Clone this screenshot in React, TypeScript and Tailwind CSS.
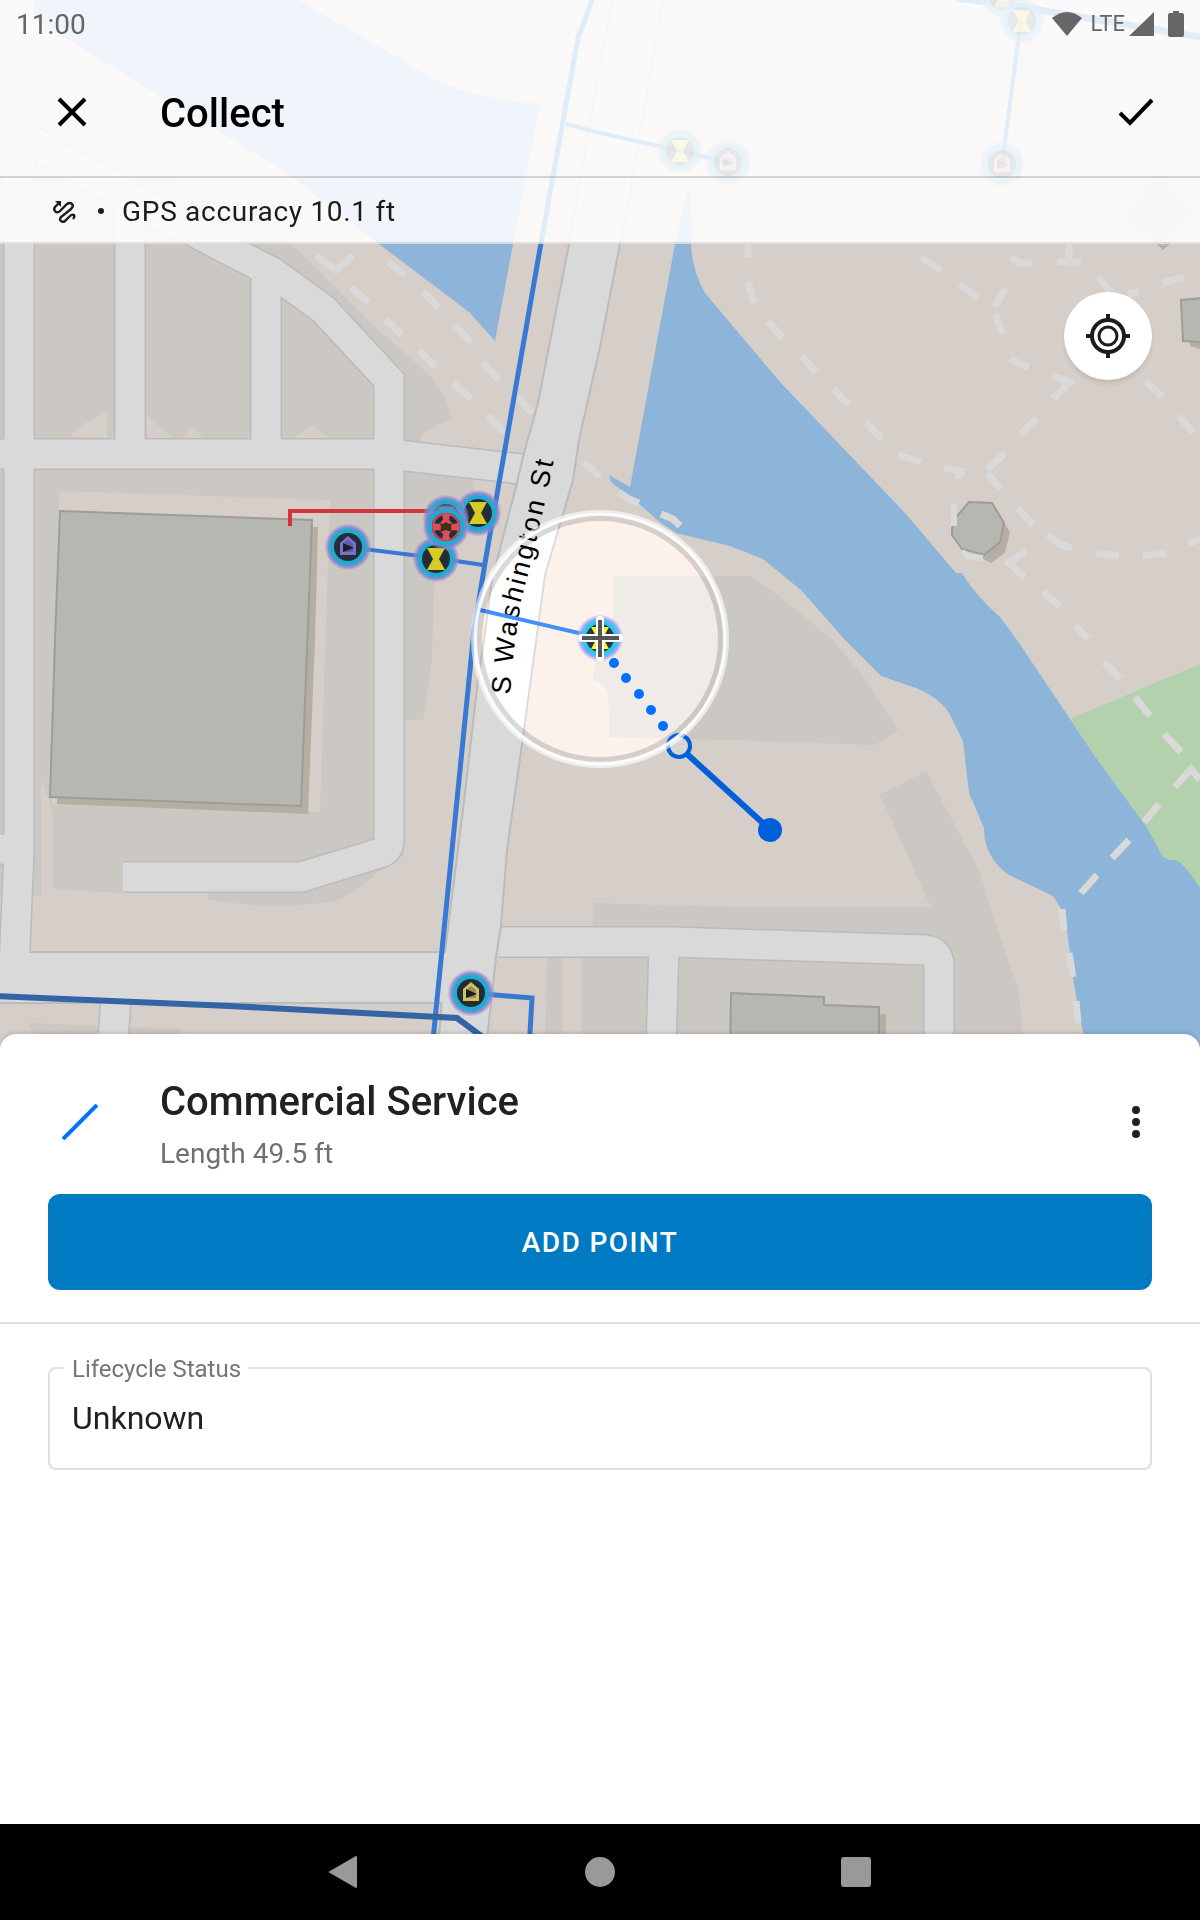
import React from "react";

const ROADS = [
  "M19 0V850L14 970",
  "M130 200V454",
  "M266 272V454",
  "M-20 112L90 175L217 244L272 272L323 309L389 380V840Q389 850 380 853L301 877H123",
  "M-10 454H389L521 469",
  "M-10 849H19",
  "M116 1000L112 1052",
  "M498 942H673L925 950Q939 951 939 966V1052",
  "M664 944L661 1052",
];

const WASHINGTON_ST =
  "M613 -4L597 83L569 244L538 403L524 453L516 487L492 580L484 640L478 680L463 810L445 952L438 1054H487L488 1030L496 957L501 926L507 850L523 737L545 575L573 480L579 440L600 347L620 244L632 180L663 -4Z";

const TRAILS =
  "M748 243V258M748 282L754 303M768 322L783 338M802 356L816 372M833 389L849 405M866 423L882 439M898 455L921 462M944 468L965 472M958 471V479M921 257L941 271M960 284L978 298M1005 288L995 307M995 314L1003 334M1010 359L1029 368M1053 376L1070 382L1053 399M1037 418L1021 434M1005 453L988 469M987 473L1001 489M1018 508L1033 525M1048 535L1059 544L1072 548M1096 553L1119 556M1143 556L1166 553M1188 544L1200 539M1026 551L1009 563L1024 577M1043 592L1060 606M1075 625L1088 639M1146 382L1163 397M1179 416L1193 433M1011 257L1020 263H1032M1057 262H1081M1069 243V262M1098 277L1111 292M1128 294L1139 292M1162 283L1184 277M661 514L673 519L680 526M619 492L629 499L639 503M1104 662L1120 678M1135 697L1150 716M1164 734L1181 752M1159 804L1144 822M1129 840L1112 858M1097 875L1081 893M1175 787L1191 769L1200 780M1062 909L1064 930M1069 953L1073 977M1076 1001L1078 1023M316 256L336 270L353 256M351 288L369 302M386 320L402 335M419 351L436 367M453 383L471 399M488 416L504 432M388 262L405 275M423 292L439 308M455 326L471 342M483 363L499 380M517 397L532 413M584 462L600 477";

function Halo() {
  return (
    <>
      <circle r="23" fill="url(#halo)" />
      <circle r="14" fill="#2b3440" />
    </>
  );
}

function Valve({ x, y }: { x: number; y: number }) {
  return (
    <g transform={`translate(${x} ${y})`}>
      <Halo />
      <path d="M-9 -11H9L3 0L9 11H-9L-3 0Z" fill="#fdf02c" />
    </g>
  );
}

function Meter({ x, y, color }: { x: number; y: number; color: string }) {
  return (
    <g transform={`translate(${x} ${y})`}>
      <Halo />
      <path d="M-8 -4L0 -11L8 -4V8H-8Z" fill={color} />
      <path d="M-5 -3L0 -7L5 -3V5H-5Z" fill="#4c4a66" opacity="0.4" />
      <path d="M-5 -4L6 1L-5 5Z" fill="#1e2030" />
    </g>
  );
}

function Regulator({ x, y }: { x: number; y: number }) {
  return (
    <g transform={`translate(${x} ${y})`}>
      <Halo />
      <circle r="13" fill="none" stroke="#ff4a5c" strokeWidth="2" />
      <path
        d="M-4 -13H4L3 -7L7 -3L13 -4V4L7 3L3 7L4 13H-4L-3 7L-7 3L-13 4V-4L-7 -3L-3 -7Z"
        fill="#ff5e6e"
      />
      <path d="M-6 -4L-3 -3L0 -5L3 -3L6 -4L5 0L6 5L0 3L-6 5L-5 0Z" fill="#4a3a10" />
    </g>
  );
}

function MapCanvas() {
  return (
    <svg
      viewBox="0 0 1200 1050"
      preserveAspectRatio="xMidYMin slice"
      className="absolute inset-0 h-full w-full"
      role="img"
      aria-label="Map of S Washington St"
    >
      <defs>
        <radialGradient id="halo">
          <stop offset="0.6" stopColor="#1ccdf0" />
          <stop offset="0.74" stopColor="#2cc6f6" />
          <stop offset="0.86" stopColor="#8d9cf6" stopOpacity="0.85" />
          <stop offset="1" stopColor="#d0a8f0" stopOpacity="0.25" />
        </radialGradient>
        <mask id="lens">
          <rect width="1200" height="1050" fill="white" />
          <circle cx="600" cy="639" r="118" fill="black" />
        </mask>
        <path id="street" d="M510 695Q514 640 522 597Q532 560 544 507L558 440" />
      </defs>

      <rect width="1200" height="1050" fill="#fcf2eb" />

      <g fill="#efebe7">
        <path d="M0 130L100 130L291 244L375 327L432 377L446 400L451 418L421 435V471L474 480V500L434 585L432 660L423 720H404V855L377 872Q350 900 325 903Q264 909 208 900V893H123L53 889V812L41 780V896H0Z" />
        <path d="M340 0L560 20L530 80L480 80L420 50Z" />
        <path d="M690 20L760 10L964 40L1200 80V110L950 80L700 50Z" />
        <path d="M613 576H751L784 600L833 640L864 677L898 730L875 745L692 739L610 737L608 697Q606 682 593 680L597 655L613 640Z" />
        <path d="M593 903L740 907L931 907L880 795L926 771L979 870L994 920L1019 990L1024 1050H582V957H592Z" />
        <path d="M547 957H562V1050H545Z" />
        <path d="M27 1023L184 1029L170 1040L40 1040Z" />
      </g>
      <g fill="#fcf2eb">
        <path d="M59 491L330 500L320 812L52 804Z" />
        <path d="M69 437Q88 418 107 412V438Z" />
        <path d="M147 415L172 438H147Z" />
        <path d="M182 438L192 426L203 438Z" />
        <path d="M293 438L312 426L329 438Z" />
      </g>

      <g fill="#a6d5ff">
        <path d="M5 0H298L402 60Q440 85 475 94L520 102L540 103L533 140L513 244L495 341L469 312L379 244L283 170L153 92Z" />
        <path d="M688 190L675 244L630 487L609 475L611 482L638 503L661 523L676 533L730 546L763 559L801 590L845 640L881 676L916 688Q945 700 953 721L963 741L969 793L984 828L985 840Q990 862 1009 875L1053 896L1065 915L1073 977L1080 1020L1088 1050H1200V880L1094 755L1070 719L1017 640L1000 617Q975 595 962 573H956L906 514L780 382L705 293Q692 270 691 244L690 190Z" />
      </g>
      <path
        d="M1070 719L1200 664V888Q1186 866 1176 860H1170L1163 857L1147 828L1094 755Z"
        fill="#d3f6cc"
      />

      <g fill="none" stroke="#dcdcdc" strokeWidth="32">
        {ROADS.map((d) => (
          <path key={d} d={d} />
        ))}
      </g>
      <path d="M-4 952H447V1003H-4Z" fill="#fff" stroke="#dcdcdc" strokeWidth="2" />
      <g fill="none" stroke="#fff" strokeWidth="29">
        {ROADS.map((d) => (
          <path key={d} d={d} />
        ))}
      </g>
      <path d="M753 -2L964 30L1200 62V10L1120 -2Z" fill="#fff" />
      <path d={WASHINGTON_ST} fill="#fff" stroke="#dcdcdc" strokeWidth="2" />
      <path d="M400 953H460V1002H400Z" fill="#fff" />

      <g fill="#d5cec0">
        <path d="M312 527H318L315 640L308 814L57 804V796H301Z" />
        <path d="M1004 523L1010 532L1005 553L991 563L981 558L984 550Z" />
        <path d="M1190 341H1200V349L1190 346Z" />
        <path d="M879 1014H886V1050H879Z" />
        <path d="M1155 242L1163 250L1172 242Z" />
      </g>
      <g fill="#d8d7d0" stroke="#b9b8b1" strokeWidth="2">
        <path d="M60 511L312 520L301 806L50 797L55 640Z" />
        <path d="M969 502L992 503L1004 523L1000 542L984 555L962 549L952 535V528L957 516Z" />
        <path d="M1202 298L1181 300L1183 341L1202 342Z" />
        <path d="M731 993L824 997V1005L879 1007V1054H730Z" />
      </g>
      <path d="M1157 172L1124 218L1163 246L1196 212Z" fill="#e6e4dd" />

      <path d={TRAILS} fill="none" stroke="#fff" strokeWidth="7" />
      <path d="M954 504V526M962 552L970 557L983 558" fill="none" stroke="#fff" strokeWidth="6" />

      <text
        className="font-['Liberation_Sans',sans-serif] text-[27px] tracking-widest"
        fill="#000"
      >
        <textPath href="#street">S Washington St</textPath>
      </text>

      <g fill="none" stroke="#4290f8" strokeWidth="4">
        <path d="M593 -2L578 38L541 243L485 563L474 630L433 1040" strokeWidth="5" />
        <path d="M566 124L600 133L681 151L728 163M1021 20L1002 164" />
        <path d="M348 547L436 558L483 565M480 610L600 638" />
        <path d="M471 993L532 998L529 1050" strokeWidth="5" />
        <path d="M-4 996L230 1006L457 1018L500 1050" stroke="#3d76c2" strokeWidth="6" />
        <path d="M956 -2L1010 5L1200 37" strokeWidth="7" />
        <path d="M290 526V511H440" stroke="#fb3c45" />
      </g>

      <Meter x={348} y={547} color="#8f85f5" />
      <Valve x={436} y={559} />
      <Valve x={478} y={513} />
      <g transform="translate(446 518)">
        <Halo />
        <path d="M-8 -11H8L3 -2H-3Z" fill="#4fb3a2" />
      </g>
      <Regulator x={446} y={527} />
      <Meter x={471} y={993} color="#f2e56a" />
      <g opacity="0.7">
        <Valve x={1003} y={-4} />
        <Valve x={680} y={151} />
        <Meter x={728} y={162} color="#f0a0d0" />
        <Valve x={1022} y={21} />
        <Meter x={1002} y={164} color="#f0a0d0" />
      </g>
      <Valve x={600} y={638} />

      <g fill="#0070ff">
        <circle cx="614" cy="663" r="5" />
        <circle cx="626" cy="678" r="5" />
        <circle cx="639" cy="694" r="5" />
        <circle cx="651" cy="710" r="5" />
        <circle cx="663" cy="726" r="5" />
        <circle cx="770" cy="830" r="12" />
      </g>
      <circle cx="679" cy="746" r="11" fill="#fff" fillOpacity="0.5" stroke="#0070ff" strokeWidth="4" />
      <path d="M687 754L765 825" stroke="#0070ff" strokeWidth="6" />

      <rect width="1200" height="1050" fill="#000" opacity="0.15" mask="url(#lens)" />

      <g fill="none" stroke="#fff">
        <circle cx="600" cy="639" r="126" strokeWidth="6" opacity="0.6" />
        <circle cx="600" cy="639" r="125" strokeWidth="3" opacity="0.8" />
      </g>
      <path d="M600 620V657M582 638H619" stroke="#fff" strokeWidth="8" strokeLinecap="round" />
      <path d="M600 620V657M582 638H619" stroke="#555" strokeWidth="4" />
    </svg>
  );
}

function StatusBar() {
  return (
    <div className="flex h-12 items-center justify-between px-4 text-[#666]">
      <span className="pt-0.5 text-[28px] leading-8">11:00</span>
      <div className="flex items-center">
        <svg viewBox="0 0 30 24" className="h-6 w-[30px]" fill="currentColor" aria-hidden="true">
          <path d="M0 6Q15 -6 30 6L15 24Z" />
        </svg>
        <span className="ml-2 text-[22px] leading-6">LTE</span>
        <svg viewBox="0 0 25 24" className="ml-1 h-6 w-[25px]" fill="currentColor" aria-hidden="true">
          <path d="M25 0V24H0Z" />
        </svg>
        <svg viewBox="0 0 16 26" className="ml-3.5 h-[26px] w-4" fill="currentColor" aria-hidden="true">
          <path d="M5 0H11V2H14Q16 2 16 4V24Q16 26 14 26H2Q0 26 0 24V4Q0 2 2 2H5Z" />
        </svg>
      </div>
    </div>
  );
}

function TopBar() {
  return (
    <header className="flex h-32 items-center px-8">
      <button type="button" aria-label="Close" className="flex size-20 items-center justify-center">
        <svg viewBox="0 0 32 32" className="size-8" fill="none" stroke="#000" strokeWidth="4" aria-hidden="true">
          <path d="M3 3L29 29M29 3L3 29" />
        </svg>
      </button>
      <h1 className="ml-12 flex-1 pt-1 text-[40px] leading-[48px] font-medium text-black">Collect</h1>
      <button type="button" aria-label="Done" className="flex size-16 items-center justify-center">
        <svg viewBox="0 0 36 28" className="h-7 w-9" fill="none" stroke="#000" strokeWidth="4" aria-hidden="true">
          <path d="M2 15L12 25L34 2" />
        </svg>
      </button>
    </header>
  );
}

function GpsBar() {
  return (
    <div className="flex h-[68px] items-center border-t-2 border-b-2 border-t-black/15 border-b-black/10 pt-0.5 pl-[52px] text-[#1c1c1c]">
      <svg viewBox="0 0 24 24" className="size-6" fill="none" stroke="currentColor" strokeWidth="2.4" aria-hidden="true">
        <path d="M3 2H9V8Z" fill="currentColor" stroke="none" />
        <path d="M7 4L3 8Q1 11 4 13Q6 14 8 12L15 5Q18 3 20 5Q22 7 19 10L9 18Q7 21 9 22Q12 24 14 21L18 17Q20 15 22 16Q23 18 21 20" />
      </svg>
      <span className="ml-[22px] size-1.5 rounded-full bg-current" />
      <p className="ml-[18px] pt-0.5 text-[28px] leading-8 tracking-wide">GPS accuracy 10.1 ft</p>
    </div>
  );
}

function DetailSheet() {
  return (
    <section className="relative -mt-4 flex flex-1 flex-col rounded-t-2xl bg-white shadow-[0_-2px_4px_rgba(0,0,0,0.12)]">
      <div className="flex items-start px-12 pt-10 pb-4">
        <svg viewBox="0 0 36 36" className="mt-[30px] ml-3.5 size-9" stroke="#0070ff" strokeWidth="4" aria-hidden="true">
          <path d="M1 35L35 1" />
        </svg>
        <div className="ml-[62px] flex-1">
          <h2 className="text-[40px] leading-[56px] font-medium text-[#212121]">Commercial Service</h2>
          <p className="text-[28px] leading-[48px] text-[#707070]">Length 49.5 ft</p>
        </div>
        <button type="button" aria-label="More options" className="mt-6 flex h-12 w-8 items-center justify-center">
          <svg viewBox="0 0 8 34" className="h-[34px] w-2" fill="#212121" aria-hidden="true">
            <circle cx="4" cy="5" r="4" />
            <circle cx="4" cy="17" r="4" />
            <circle cx="4" cy="29" r="4" />
          </svg>
        </button>
      </div>
      <button
        type="button"
        className="mx-12 h-24 rounded-xl bg-[#007ac2] pt-0.5 text-[28px] leading-8 font-medium tracking-wider text-white"
      >
        ADD POINT
      </button>
      <hr className="mt-8 border-t-2 border-[#e0e0e0]" />
      <fieldset className="mx-12 mt-7 rounded-lg border-2 border-[#e0e0e0] px-3.5 pb-5">
        <legend className="px-2 text-2xl leading-8 text-[#757575]">
          <label htmlFor="lifecycle-status" className="block pt-0.5 leading-[30px]">
            Lifecycle Status
          </label>
        </legend>
        <input
          id="lifecycle-status"
          type="text"
          defaultValue="Unknown"
          className="block h-16 w-full px-2 pt-1 text-[32px] text-[#212121] outline-none"
        />
      </fieldset>
    </section>
  );
}

function NavBar() {
  return (
    <nav className="flex h-24 items-center justify-center gap-40 bg-black">
      <button type="button" aria-label="Back" className="flex size-24 items-center justify-center">
        <svg viewBox="0 0 30 32" className="h-8 w-[30px]" fill="#999" stroke="#999" strokeWidth="2" strokeLinejoin="round" aria-hidden="true">
          <path d="M1 16L27 1V31Z" />
        </svg>
      </button>
      <button type="button" aria-label="Home" className="flex size-24 items-center justify-center">
        <span className="size-[30px] rounded-full bg-[#999]" />
      </button>
      <button type="button" aria-label="Recent apps" className="flex size-24 items-center justify-center">
        <span className="size-[30px] rounded-[3px] bg-[#999]" />
      </button>
    </nav>
  );
}

export default function App() {
  return (
    <div className="flex min-h-screen flex-col bg-white font-[Roboto,sans-serif]">
      <main className="relative h-[1050px] overflow-hidden">
        <MapCanvas />
        <div className="relative bg-white/85">
          <StatusBar />
          <TopBar />
          <GpsBar />
        </div>
        <div className="relative flex justify-end px-12 pt-12">
          <button
            type="button"
            aria-label="Center on my location"
            className="flex size-[88px] items-center justify-center rounded-full bg-white shadow-md"
          >
            <svg viewBox="0 0 44 44" className="size-11" fill="none" stroke="#1c1c1c" strokeWidth="4" aria-hidden="true">
              <circle cx="22" cy="22" r="16" />
              <circle cx="22" cy="22" r="9" strokeWidth="3" />
              <path d="M22 0V6M22 38V44M0 22H6M38 22H44" />
            </svg>
          </button>
        </div>
      </main>
      <DetailSheet />
      <NavBar />
    </div>
  );
}
